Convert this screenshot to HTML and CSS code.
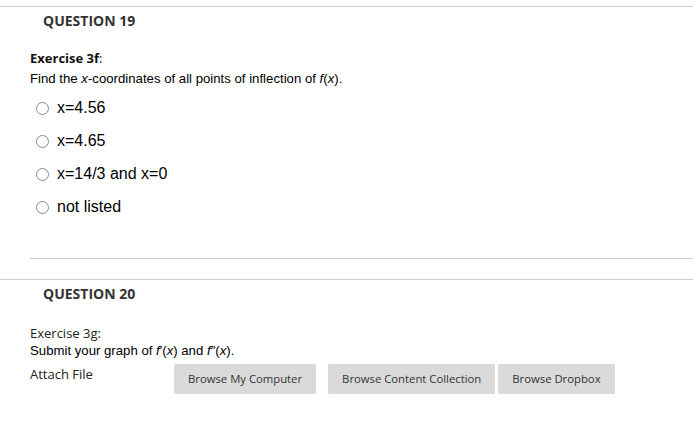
FILE: index.html
```html
<!DOCTYPE html>
<html lang="en">
<head>
    <meta charset="UTF-8">
    <meta name="viewport" content="width=device-width, initial-scale=1.0">
    <title>Assessment</title>
    <link rel="stylesheet" href="styles.css">
</head>
<body>
    <div class="question first">
        <h3 class="q-title">QUESTION 19</h3>
        <div class="q-body">
            <p class="q-label"><b>Exercise 3f</b>:</p>
            <p class="q-text">Find the <i>x</i>-coordinates of all points of inflection of <i>f</i>(<i>x</i>).</p>
            <ul class="answers">
                <li><span class="radio"></span>x=4.56</li>
                <li><span class="radio"></span>x=4.65</li>
                <li><span class="radio"></span>x=14/3 and x=0</li>
                <li><span class="radio"></span>not listed</li>
            </ul>
            <div class="divider"></div>
        </div>
    </div>

    <div class="question">
        <h3 class="q-title">QUESTION 20</h3>
        <div class="q-body">
            <p class="q-label small">Exercise 3g:</p>
            <p class="q-text tight">Submit your graph of <i>f</i>&#8242;(<i>x</i>) and <i>f</i>&#8243;(<i>x</i>).</p>
            <div class="attach">
                <span class="attach-label">Attach File</span>
                <button class="btn gap">Browse My Computer</button>
                <button class="btn">Browse Content Collection</button>
                <button class="btn">Browse Dropbox</button>
            </div>
        </div>
    </div>
</body>
</html>
```

FILE: styles.css
```css
* {
    margin: 0;
    padding: 0;
    box-sizing: border-box;
}

body {
    font-family: "Open Sans", sans-serif;
    color: #000;
    background-color: #fff;
}

.question {
    border-top: 1px solid #cdcdcd;
}

.question.first {
    margin-top: 6px;
}

.q-title {
    padding: 4px 0 0 43px;
    font-size: 14px;
    line-height: 20px;
    font-weight: bold;
    color: #333;
}

.q-body {
    padding-left: 30px;
    padding-top: 17px;
}

.q-label {
    font-size: 13px;
    line-height: 20px;
    color: #111;
}

.q-label.small {
    margin-top: 3px;
    line-height: 18px;
    color: #222;
}

.q-text {
    font-family: "Liberation Sans", Arial, sans-serif;
    font-size: 13.2px;
    line-height: 21px;
}

.q-text.tight {
    margin-top: 1px;
    line-height: 16px;
}

.answers {
    list-style: none;
    margin-top: 2px;
}

.answers li {
    display: flex;
    align-items: center;
    padding: 7px 0 6px 6px;
    font-family: "Liberation Sans", Arial, sans-serif;
    font-size: 16px;
    line-height: 20px;
}

.radio {
    width: 13px;
    height: 13px;
    margin-right: 8px;
    border: 1px solid #8a8a8a;
    border-radius: 50%;
    background-color: #fff;
}

.divider {
    margin-top: 35px;
    height: 21px;
    border-top: 1px solid #cdcdcd;
}

.attach {
    display: flex;
    align-items: flex-start;
    margin-top: 5px;
}

.attach-label {
    width: 144px;
    font-size: 13px;
    line-height: 20px;
    color: #222;
}

.btn {
    height: 30px;
    padding: 0 14px;
    margin-right: 3px;
    border: none;
    border-radius: 2px;
    background-color: #dadada;
    font-family: "Open Sans", sans-serif;
    font-size: 11.3px;
    line-height: 30px;
    color: #333;
}

.btn.gap {
    margin-right: 12px;
}
```
